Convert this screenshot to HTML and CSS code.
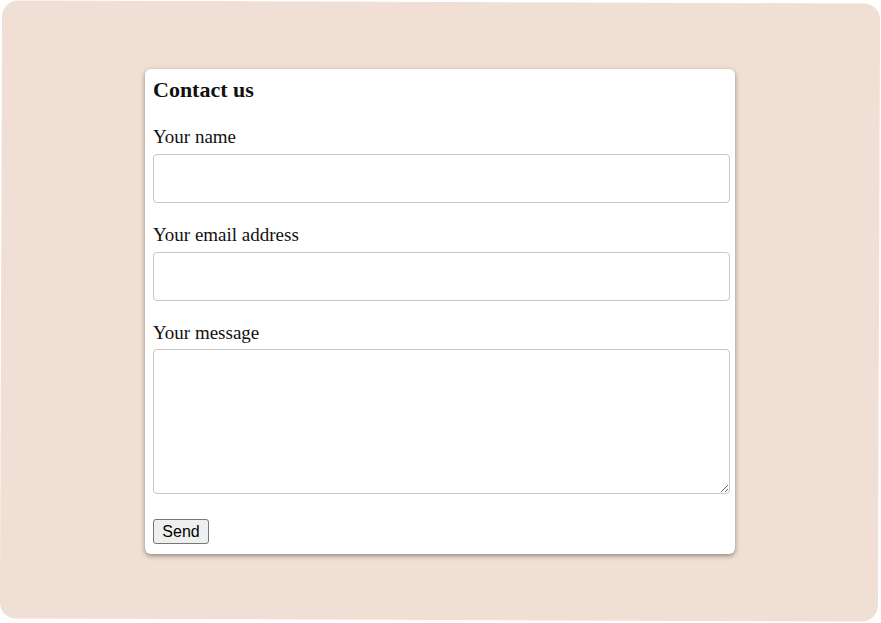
FILE: index.html
```html
<!DOCTYPE html>
<html lang="en">
<head>
<meta charset="utf-8">
<title>Contact us</title>
<link rel="stylesheet" href="styles.css">
</head>
<body>
<div class="stage">
  <form class="card">
    <h2 class="title">Contact us</h2>
    <label class="label" for="name">Your name</label>
    <input class="field" id="name" type="text">
    <label class="label" for="email">Your email address</label>
    <input class="field" id="email" type="email">
    <label class="label" for="msg">Your message</label>
    <textarea class="field area" id="msg"></textarea>
    <div class="actions"><button class="send" type="button">Send</button></div>
  </form>
</div>
</body>
</html>
```

FILE: styles.css
```css
html, body {
  margin: 0;
  padding: 0;
  background: #ffffff;
}
body {
  font-family: "Liberation Serif", "Times New Roman", serif;
  color: #111;
}
.stage {
  position: relative;
  width: 881px;
  height: 623px;
  display: flex;
  align-items: center;
  justify-content: center;
  overflow: hidden;
}
.stage::before {
  content: "";
  position: absolute;
  left: 1px;
  top: 1.5px;
  width: 878px;
  height: 618px;
  border-radius: 16px;
  background: #f0dfd5;
  transform: rotate(0.2deg);
}
.card {
  position: relative;
  box-sizing: border-box;
  width: 590px;
  height: 485px;
  margin-left: -1px;
  padding: 8px 5px 10px 8px;
  background: #fff;
  border-radius: 6px;
  box-shadow: 0 2px 5px rgba(0, 0, 0, 0.4);
  display: flex;
  flex-direction: column;
}
.title {
  margin: 0 0 23px;
  font-size: 22px;
  font-weight: bold;
  line-height: 25px;
}
.label {
  display: block;
  font-size: 19px;
  line-height: 21px;
  margin-bottom: 8px;
  position: relative;
  top: 1px;
}
.field {
  display: block;
  box-sizing: border-box;
  width: 100%;
  height: 49px;
  margin: 0 0 20px;
  border: 1px solid #c6c6c6;
  border-radius: 4px;
  background: #fff;
  font: 16px "Liberation Sans", Arial, sans-serif;
  padding: 4px 8px;
}
.area {
  height: 145px;
  margin-top: -1px;
  margin-bottom: 25px;
  resize: vertical;
}
.actions {
  display: flex;
}
.send {
  box-sizing: border-box;
  height: 25px;
  width: 56px;
  padding: 0;
  font: 16px "Liberation Sans", Arial, sans-serif;
  color: #000;
  background: #efefef;
  border: 1px solid #767676;
  border-radius: 3px;
}
```
